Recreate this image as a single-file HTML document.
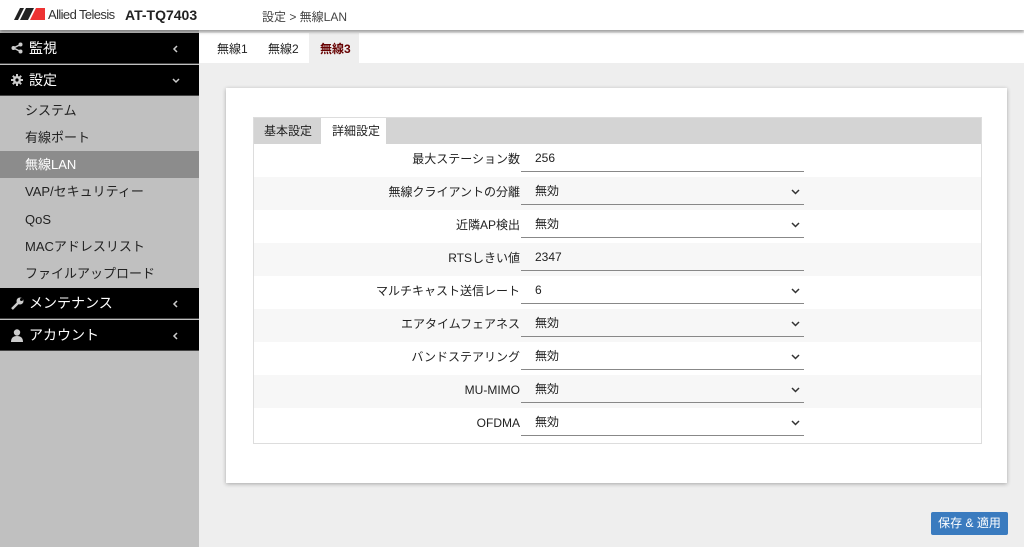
<!DOCTYPE html>
<html><head><meta charset="utf-8"><style>
*{margin:0;padding:0;box-sizing:border-box}
body{width:1024px;height:547px;overflow:hidden;font-family:"Liberation Sans","Noto Sans CJK JP",sans-serif;font-size:12px;color:#222;background:#eee;position:relative}
.hdr{position:absolute;left:0;top:0;width:1024px;height:30px;background:#fff;box-shadow:0 2px 3px rgba(0,0,0,.35);z-index:2}
.side{position:absolute;left:0;top:30px;width:199px;height:517px;background:#c0c0c0}
.m{position:absolute;left:0;width:199px;height:31px;background:#000;color:#fff;font-size:14px;line-height:31px;padding-left:29px;border-bottom:1px solid #444}
.m svg.ar{position:absolute;left:172px;top:12px}
.m .ic{position:absolute;left:11px;top:9px}
.s{position:absolute;left:0;width:199px;height:27px;line-height:27px;padding-left:25px;font-size:13px;color:#222}
.tabs{position:absolute;left:199px;top:33px;width:825px;height:30px;background:#fff}
.tabs span{position:absolute;top:0;line-height:32px;font-size:12px}
.card{position:absolute;left:226px;top:88px;width:781px;height:395px;background:#fff;box-shadow:0 1px 4px rgba(0,0,0,.3)}
.box{position:absolute;left:253px;top:117px;width:729px;height:327px;border:1px solid #ddd;background:#fff}
.tb{position:absolute;left:0;top:0;width:727px;height:26px;background:#d4d4d4}
.tb span{position:absolute;top:0;line-height:26px;font-size:12px}
.row{position:absolute;left:0;width:727px;height:33px}
.row.g{background:#f7f7f7}
.lb{position:absolute;right:461px;top:0;line-height:31px;font-size:12px}
.in{position:absolute;left:267px;top:3px;width:283px;height:25px;border-bottom:1px solid #888;line-height:22px;padding-left:14px;font-size:12px}
.in svg{position:absolute;right:4px;top:9px}
.btn{position:absolute;left:931px;top:512px;width:77px;height:23px;background:#3a7bbf;color:#fff;font-size:12px;line-height:23px;text-align:center;border-radius:2px}
</style></head><body>
<div class="hdr">
<svg style="position:absolute;left:14px;top:8px" width="31" height="12" viewBox="0 0 31 12"><polygon points="0,12 6,0 10,0 4,12" fill="#222"/><polygon points="6,12 12,0 20,0 14,12" fill="#222"/><polygon points="16,12 22,0 31,0 31,12" fill="#e33"/></svg>
<span style="position:absolute;left:48px;top:7px;font-size:13px;color:#333;letter-spacing:-.6px">Allied Telesis</span>
<span style="position:absolute;left:125px;top:7px;font-size:14px;font-weight:bold">AT-TQ7403</span>
<span style="position:absolute;left:262px;top:8px;font-size:12px;color:#444">設定 &gt; 無線LAN</span>
</div>
<div class="side">
<div class="m" style="top:3px"><svg class="ic" width="12" height="12" viewBox="0 0 12 12"><circle cx="2.5" cy="6" r="2" fill="#ccc"/><circle cx="9.5" cy="2.5" r="2" fill="#ccc"/><circle cx="9.5" cy="9.5" r="2" fill="#ccc"/><path d="M2.5 6 9.5 2.5M2.5 6 9.5 9.5" stroke="#ccc" stroke-width="1.5"/></svg>監視<svg class="ar" width="6" height="8" viewBox="0 0 6 8"><path d="M5 1 2 4 5 7" stroke="#ccc" stroke-width="1.5" fill="none"/></svg></div>
<div class="m" style="top:35px"><svg class="ic" width="12" height="12" viewBox="0 0 12 12"><circle cx="6" cy="6" r="4" fill="#ccc"/><path d="M6 0v12M0 6h12M1.8 1.8l8.4 8.4M10.2 1.8l-8.4 8.4" stroke="#ccc" stroke-width="2"/><circle cx="6" cy="6" r="1.6" fill="#000"/></svg>設定<svg class="ar" width="8" height="6" viewBox="0 0 8 6" style="top:13px"><path d="M1 1 4 4 7 1" stroke="#ccc" stroke-width="1.5" fill="none"/></svg></div>
<div class="s" style="top:67px">システム</div>
<div class="s" style="top:94px">有線ポート</div>
<div class="s" style="top:121px;background:#8c8c8c;color:#fff">無線LAN</div>
<div class="s" style="top:148px">VAP/セキュリティー</div>
<div class="s" style="top:176px">QoS</div>
<div class="s" style="top:203px">MACアドレスリスト</div>
<div class="s" style="top:230px">ファイルアップロード</div>
<div class="m" style="top:258px"><svg class="ic" width="13" height="13" viewBox="0 0 13 13"><path d="M1 12 7 6" stroke="#ccc" stroke-width="2.5"/><circle cx="9" cy="4" r="3.5" fill="#ccc"/><circle cx="10.5" cy="2.5" r="1.5" fill="#000"/></svg>メンテナンス<svg class="ar" width="6" height="8" viewBox="0 0 6 8"><path d="M5 1 2 4 5 7" stroke="#ccc" stroke-width="1.5" fill="none"/></svg></div>
<div class="m" style="top:290px"><svg class="ic" width="12" height="13" viewBox="0 0 12 13"><circle cx="6" cy="3.5" r="3.2" fill="#ccc"/><path d="M0 13c0-4 2-6 6-6s6 2 6 6z" fill="#ccc"/></svg>アカウント<svg class="ar" width="6" height="8" viewBox="0 0 6 8"><path d="M5 1 2 4 5 7" stroke="#ccc" stroke-width="1.5" fill="none"/></svg></div>
</div>
<div class="tabs"><span style="left:18px">無線1</span><span style="left:69px">無線2</span><div style="position:absolute;left:110px;top:0;width:50px;height:30px;background:#eee"></div><span style="left:121px;color:#600;font-weight:bold">無線3</span></div>
<div class="card"></div>
<div class="box">
<div class="tb"><span style="left:10px">基本設定</span><div style="position:absolute;left:67px;top:0;width:65px;height:26px;background:#fff"></div><span style="left:78px">詳細設定</span></div>
<div class="row" style="top:26px"><span class="lb">最大ステーション数</span><div class="in">256</div></div>
<div class="row g" style="top:59px"><span class="lb">無線クライアントの分離</span><div class="in">無効<svg width="9" height="6" viewBox="0 0 9 6"><path d="M1 1 4.5 4.5 8 1" stroke="#333" stroke-width="1.5" fill="none"/></svg></div></div>
<div class="row" style="top:92px"><span class="lb">近隣AP検出</span><div class="in">無効<svg width="9" height="6" viewBox="0 0 9 6"><path d="M1 1 4.5 4.5 8 1" stroke="#333" stroke-width="1.5" fill="none"/></svg></div></div>
<div class="row g" style="top:125px"><span class="lb">RTSしきい値</span><div class="in">2347</div></div>
<div class="row" style="top:158px"><span class="lb">マルチキャスト送信レート</span><div class="in">6<svg width="9" height="6" viewBox="0 0 9 6"><path d="M1 1 4.5 4.5 8 1" stroke="#333" stroke-width="1.5" fill="none"/></svg></div></div>
<div class="row g" style="top:191px"><span class="lb">エアタイムフェアネス</span><div class="in">無効<svg width="9" height="6" viewBox="0 0 9 6"><path d="M1 1 4.5 4.5 8 1" stroke="#333" stroke-width="1.5" fill="none"/></svg></div></div>
<div class="row" style="top:224px"><span class="lb">バンドステアリング</span><div class="in">無効<svg width="9" height="6" viewBox="0 0 9 6"><path d="M1 1 4.5 4.5 8 1" stroke="#333" stroke-width="1.5" fill="none"/></svg></div></div>
<div class="row g" style="top:257px"><span class="lb">MU-MIMO</span><div class="in">無効<svg width="9" height="6" viewBox="0 0 9 6"><path d="M1 1 4.5 4.5 8 1" stroke="#333" stroke-width="1.5" fill="none"/></svg></div></div>
<div class="row" style="top:290px"><span class="lb">OFDMA</span><div class="in">無効<svg width="9" height="6" viewBox="0 0 9 6"><path d="M1 1 4.5 4.5 8 1" stroke="#333" stroke-width="1.5" fill="none"/></svg></div></div>
</div>
<div class="btn">保存 &amp; 適用</div>
</body></html>
